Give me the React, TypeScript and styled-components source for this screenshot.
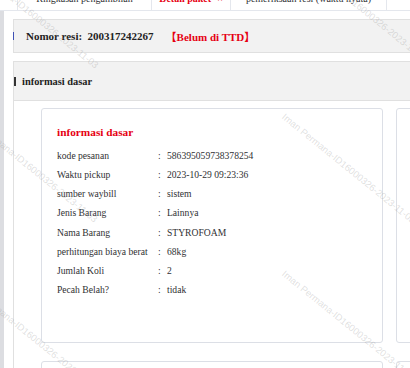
import React from "react";
import styled, { createGlobalStyle } from "styled-components";

const GlobalStyle = createGlobalStyle`
  *, *::before, *::after {
    box-sizing: border-box;
  }
  html, body {
    margin: 0;
    padding: 0;
    background: #ffffff;
    overflow: hidden;
  }
  body {
    width: 410px;
    height: 368px;
    font-family: "Liberation Serif", "Times New Roman", "Noto Sans CJK SC", serif;
    color: #303133;
  }
`;

const Page = styled.div`
  position: relative;
  width: 410px;
  height: 368px;
  overflow: hidden;
`;

const TabBar = styled.div`
  display: flex;
  height: 25px;
  margin-top: -14px;
  padding-left: 17px;
  border-bottom: 1px solid #e4e7ed;
  white-space: nowrap;
`;

const Tab = styled.div<{ $active?: boolean; $w: number }>`
  flex: 0 0 ${(p) => p.$w}px;
  display: flex;
  align-items: center;
  justify-content: center;
  gap: 6px;
  border-left: 1px solid #e4e7ed;
  font-size: 10px;
  color: ${(p) => (p.$active ? "#e60012" : "#303133")};
  font-weight: ${(p) => (p.$active ? "bold" : "normal")};
`;

const Body = styled.div`
  display: flex;
  height: 360px;
`;

const Strip = styled.div`
  flex: 0 0 4px;
  background: #dcdde1;
`;

const Main = styled.div`
  flex: 0 0 760px;
  padding: 8px 0 0 9px;
  display: flex;
  flex-direction: column;
  gap: 8px;
`;

const ResiBox = styled.div`
  flex-shrink: 0;
  height: 34px;
  display: flex;
  align-items: center;
  background: #f2f2f2;
  border: 1px solid #e0e0e0;
  font-size: 11px;
  font-weight: bold;
  color: #222;
`;

const BlueBar = styled.span`
  width: 1px;
  height: 8px;
  margin-left: -1px;
  margin-right: 12px;
  background: #3f51b5;
`;

const Red = styled.span`
  color: #e60012;
  margin-left: 12px;
`;

const Section = styled.div`
  flex-shrink: 0;
  border: 1px solid #e0e0e0;
  border-right: none;
`;

const SectionHead = styled.div`
  height: 39px;
  display: flex;
  align-items: center;
  background: #f2f2f2;
  border-bottom: 1px solid #e0e0e0;
  font-size: 10.4px;
  font-weight: bold;
  color: #222;
`;

const DarkBar = styled.span`
  width: 2px;
  height: 9px;
  margin-right: 6px;
  background: #333;
`;

const CardGrid = styled.div`
  display: grid;
  grid-template-columns: 342px 342px;
  gap: 18px 13px;
  padding: 7px 0 0 27px;
`;

const Card = styled.div`
  height: 235px;
  border: 1px solid #dcdfe6;
  border-radius: 3px;
  padding: 14px 16px 0 15px;
`;

const CardTitle = styled.div`
  font-size: 11.3px;
  line-height: 19px;
  font-weight: bold;
  color: #e60012;
  margin-bottom: 4px;
`;

const Row = styled.div`
  display: grid;
  grid-template-columns: 101px 9px 1fr;
  font-size: 9.6px;
  line-height: 19.15px;
  color: #303133;
`;

const Watermark = styled.span`
  position: absolute;
  transform-origin: 0 0;
  transform: rotate(39deg);
  font-family: "Liberation Sans", Arial, sans-serif;
  font-size: 9.5px;
  color: rgba(150, 150, 150, 0.3);
  white-space: nowrap;
  pointer-events: none;
`;

const rows: [string, string][] = [
  ["kode pesanan", "586395059738378254"],
  ["Waktu pickup", "2023-10-29 09:23:36"],
  ["sumber waybill", "sistem"],
  ["Jenis Barang", "Lainnya"],
  ["Nama Barang", "STYROFOAM"],
  ["perhitungan biaya berat", "68kg"],
  ["Jumlah Koli", "2"],
  ["Pecah Belah?", "tidak"],
];

const marks = [
  { x: -30, y: -44 },
  { x: -31, y: 110 },
  { x: -31, y: 278 },
  { x: 299, y: -50 },
  { x: 287, y: 111 },
  { x: 287, y: 268 },
];

export default function App() {
  return (
    <Page>
      <GlobalStyle />
      <TabBar>
        <Tab $w={134}>Ringkasan pengambilan</Tab>
        <Tab $w={79} $active>
          Detail paket <span>×</span>
        </Tab>
        <Tab $w={156}>pemeriksaan resi (waktu nyata)</Tab>
        <Tab $w={120}>riwayat</Tab>
      </TabBar>
      <Body>
        <Strip />
        <Main>
          <ResiBox>
            <BlueBar />
            Nomor resi:&nbsp; 200317242267
            <Red>【Belum di TTD】</Red>
          </ResiBox>
          <Section>
            <SectionHead>
              <DarkBar />
              informasi dasar
            </SectionHead>
            <CardGrid>
              <Card>
                <CardTitle>informasi dasar</CardTitle>
                {rows.map(([k, v]) => (
                  <Row key={k}>
                    <span>{k}</span>
                    <span>:</span>
                    <span>{v}</span>
                  </Row>
                ))}
              </Card>
              <Card />
              <Card />
              <Card />
            </CardGrid>
          </Section>
        </Main>
      </Body>
      {marks.map((m, i) => (
        <Watermark key={i} style={{ left: m.x, top: m.y }}>
          Iman Permana-ID16000326-2023-11-03
        </Watermark>
      ))}
    </Page>
  );
}
